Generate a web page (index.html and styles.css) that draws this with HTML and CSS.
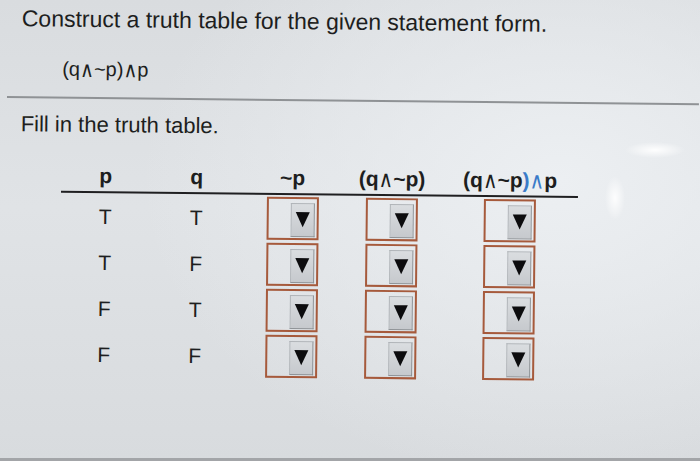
FILE: index.html
```html
<!DOCTYPE html>
<html lang="en">
<head>
<meta charset="utf-8">
<title>Truth table</title>
<link rel="stylesheet" href="styles.css">
</head>
<body>
<div class="page">
  <div class="intro">
    <p class="title">Construct a truth table for the given statement form.</p>
    <p class="formula">(q<span class="and">∧</span>~p)<span class="and">∧</span>p</p>
  </div>
  <hr class="sep">
  <div class="body">
    <p class="instr">Fill in the truth table.</p>
    <div class="table">
      <div class="row head">
        <div class="cell">p</div>
        <div class="cell">q</div>
        <div class="cell">~p</div>
        <div class="cell">(q<span class="and">∧</span>~p)</div>
        <div class="cell">(q<span class="and">∧</span>~p<span class="hl">)<span class="and">∧</span></span>p</div>
      </div>
      <div class="rows">
        <div class="row">
          <div class="cell">T</div><div class="cell">T</div>
          <div class="cell"><div class="dd"><span class="btn"><span class="tri"></span></span></div></div>
          <div class="cell"><div class="dd"><span class="btn"><span class="tri"></span></span></div></div>
          <div class="cell"><div class="dd"><span class="btn"><span class="tri"></span></span></div></div>
        </div>
        <div class="row">
          <div class="cell">T</div><div class="cell">F</div>
          <div class="cell"><div class="dd"><span class="btn"><span class="tri"></span></span></div></div>
          <div class="cell"><div class="dd"><span class="btn"><span class="tri"></span></span></div></div>
          <div class="cell"><div class="dd"><span class="btn"><span class="tri"></span></span></div></div>
        </div>
        <div class="row">
          <div class="cell">F</div><div class="cell">T</div>
          <div class="cell"><div class="dd"><span class="btn"><span class="tri"></span></span></div></div>
          <div class="cell"><div class="dd"><span class="btn"><span class="tri"></span></span></div></div>
          <div class="cell"><div class="dd"><span class="btn"><span class="tri"></span></span></div></div>
        </div>
        <div class="row">
          <div class="cell">F</div><div class="cell">F</div>
          <div class="cell"><div class="dd"><span class="btn"><span class="tri"></span></span></div></div>
          <div class="cell"><div class="dd"><span class="btn"><span class="tri"></span></span></div></div>
          <div class="cell"><div class="dd"><span class="btn"><span class="tri"></span></span></div></div>
        </div>
      </div>
    </div>
  </div>
</div>
</body>
</html>
```

FILE: styles.css
```css
html {
  height: 100%;
  background:
    linear-gradient(to top, #a3a5a8 0, #a3a5a8 3px, transparent 3px),
    radial-gradient(ellipse 30px 8px at 655px 150px, rgba(255,255,255,0.95), rgba(255,255,255,0) 100%),
    radial-gradient(ellipse 10px 22px at 615px 198px, rgba(255,255,255,0.9), rgba(255,255,255,0) 100%),
    radial-gradient(ellipse 420px 300px at 560px 180px, #eceff2, rgba(236,239,242,0) 100%),
    linear-gradient(to bottom, #d9dcdf 0%, #e0e3e6 45%, #d8dbde 100%);
}
body {
  margin: 0;
  height: 100%;
  font-family: "Liberation Sans", Arial, sans-serif;
  color: #1d1e20;
  overflow: hidden;
}
.page {
  transform: rotate(0.6deg);
  transform-origin: 0 0;
  padding-top: 5px;
}
.intro {
  padding-left: 22px;
}
.title {
  margin: 0;
  font-size: 23px;
  line-height: 26px;
}
.formula {
  margin: 25px 0 0 41px;
  font-size: 20px;
  line-height: 24px;
}
.and {
  font-family: "DejaVu Sans", sans-serif;
  font-weight: normal;
  font-size: 0.95em;
  display: inline-block;
  transform: scaleY(1.15);
  margin: 0;
}
.sep {
  margin: 16px 0 0 8px;
  border: 0;
  height: 2px;
  background: #8f9295;
}
.body {
  padding-left: 22px;
}
.instr {
  margin: 13px 0 0;
  font-size: 22px;
  line-height: 26px;
}
.table {
  margin: 26px 0 0 41px;
  width: 517px;
}
.row {
  display: grid;
  grid-template-columns: 89px 93px 99px 100px 136px;
  height: 43px;
}
.cell {
  display: flex;
  align-items: center;
  justify-content: center;
  font-size: 21px;
}
.head {
  height: 24px;
  padding-bottom: 3px;
  border-bottom: 2px solid #1f1f21;
}
.head .cell {
  font-weight: bold;
  font-size: 21px;
}
.hl {
  color: #3a7bc8;
}
.rows {
  display: flex;
  flex-direction: column;
  gap: 3px;
  padding-top: 2px;
}
.dd {
  width: 52px;
  height: 43px;
  box-sizing: border-box;
  border: 2px solid #a65a3c;
  display: flex;
  justify-content: flex-end;
  align-items: flex-start;
  padding: 4px 2px 0 0;
}
.btn {
  width: 24px;
  height: 34px;
  box-sizing: border-box;
  background: linear-gradient(to bottom, #dadde0, #c6c9cd);
  border: 1px solid #b0b4b8;
  border-right-color: #8d9195;
  border-bottom-color: #8d9195;
  display: flex;
  justify-content: center;
  padding-top: 8px;
}
.tri {
  width: 0;
  height: 0;
  border-left: 7px solid transparent;
  border-right: 7px solid transparent;
  border-top: 15px solid #0c0c0e;
}
```
